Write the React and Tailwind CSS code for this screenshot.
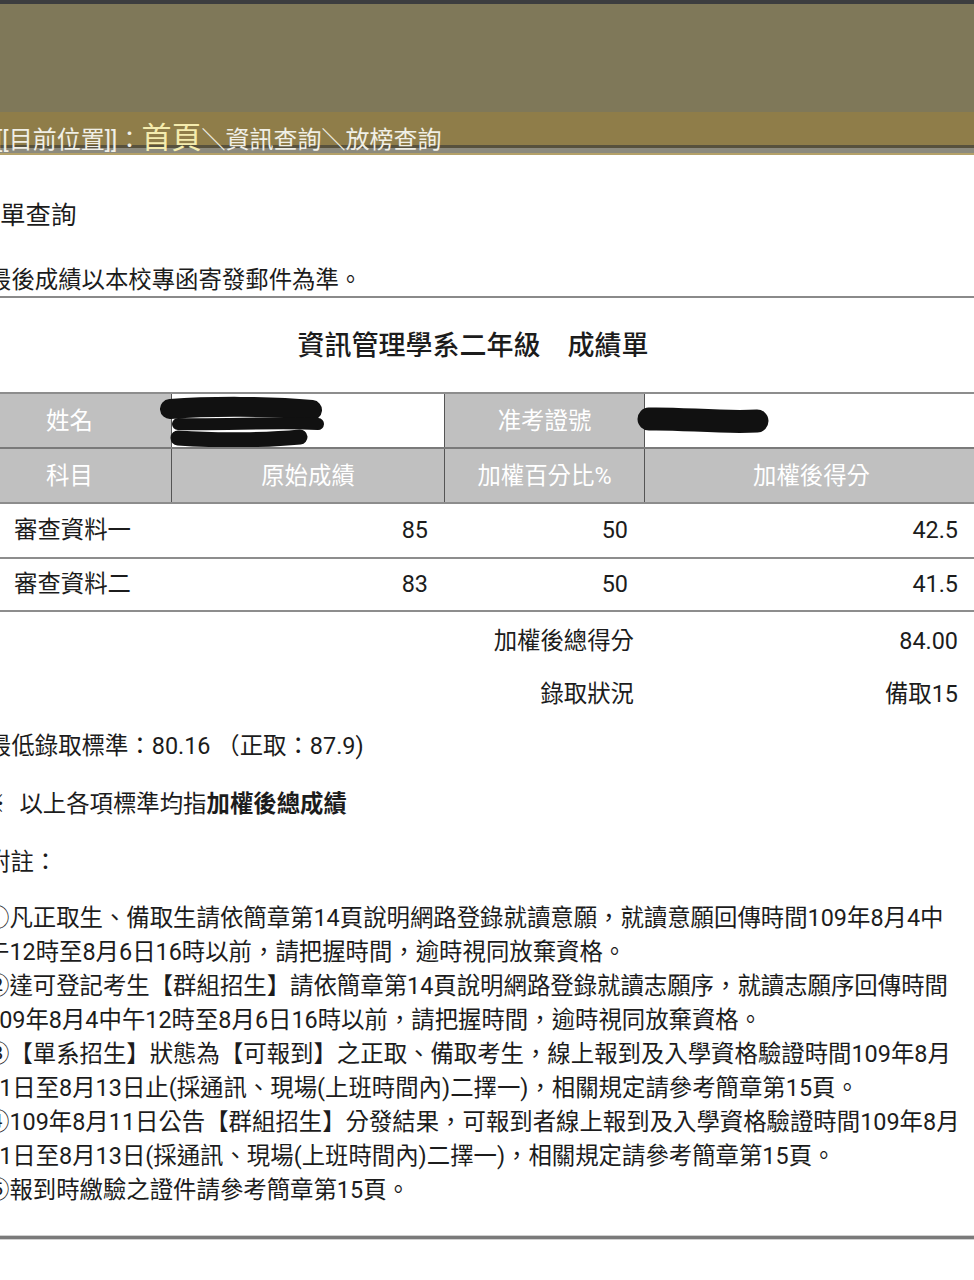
const notes = [
  '①凡正取生、備取生請依簡章第14頁說明網路登錄就讀意願，就讀意願回傳時間109年8月4中',
  '午12時至8月6日16時以前，請把握時間，逾時視同放棄資格。',
  '②達可登記考生【群組招生】請依簡章第14頁說明網路登錄就讀志願序，就讀志願序回傳時間',
  '109年8月4中午12時至8月6日16時以前，請把握時間，逾時視同放棄資格。',
  '③【單系招生】狀態為【可報到】之正取、備取考生，線上報到及入學資格驗證時間109年8月',
  '11日至8月13日止(採通訊、現場(上班時間內)二擇一)，相關規定請參考簡章第15頁。',
  '④109年8月11日公告【群組招生】分發結果，可報到者線上報到及入學資格驗證時間109年8月',
  '11日至8月13日(採通訊、現場(上班時間內)二擇一)，相關規定請參考簡章第15頁。',
  '⑤報到時繳驗之證件請參考簡章第15頁。',
];

const scores = [
  { name: '審查資料一', raw: '85', pct: '50', weighted: '42.5' },
  { name: '審查資料二', raw: '83', pct: '50', weighted: '41.5' },
];

const Header = () => (
  <div>
    <div className="h-[4px] bg-[#3c3d3f]" />
    <div className="h-[108px] bg-[#7f7859]" />
    <div className="h-[33px] bg-[#8f7d49] flex items-end">
      <div className="relative z-10 -ml-[4px] -mb-[8px] flex items-baseline whitespace-nowrap text-[24px] leading-none text-[#f0efe6]">
        <span>[[目前位置]]：</span>
        <span className="text-[30px] text-[#f4ecae]">首頁</span>
        <span>＼資訊查詢＼放榜查詢</span>
      </div>
    </div>
    <div className="h-[3px] bg-[#57513d]" />
    <div className="h-[5px] bg-[#8c8a7d]" />
    <div className="h-[2px] bg-[#b4a169]" />
  </div>
);

const Row = ({ children, last }) => (
  <div
    className={
      'grid grid-cols-[204px_273px_200px_333px] h-[55px] border-t-2 border-[#8d8d8d]' +
      (last ? ' border-b-2' : '')
    }
  >
    {children}
  </div>
);

const HeadCell = ({ children, edge }) => (
  <div
    className={
      'flex items-center justify-center pt-[3px] bg-[#c0c0c0] text-white' +
      (edge ? ' border-r-[1.5px] border-[#555555]' : '')
    }
  >
    {children}
  </div>
);

const ScoreTable = () => (
  <div className="text-[23.4px]">
    <Row>
      <HeadCell edge>姓名</HeadCell>
      <div className="relative bg-white border-r-[1.5px] border-[#555555]">
        <svg className="absolute left-[-12px] top-0 w-[170px] h-[53px]" viewBox="0 0 170 53">
          <path d="M10 15 C 50 12, 110 12, 152 16" stroke="#111" strokeWidth="20" strokeLinecap="round" fill="none" />
          <path d="M18 30 C 60 31, 120 28, 158 30" stroke="#111" strokeWidth="12" strokeLinecap="round" fill="none" />
          <path d="M18 44 C 60 47, 110 46, 140 43" stroke="#111" strokeWidth="15" strokeLinecap="round" fill="none" />
        </svg>
      </div>
      <HeadCell edge>准考證號</HeadCell>
      <div className="relative bg-white">
        <svg className="absolute left-[-15px] top-0 w-[150px] h-[53px]" viewBox="0 0 150 53">
          <path d="M19 25 C 50 24, 90 29, 127 27" stroke="#111" strokeWidth="23" strokeLinecap="round" fill="none" />
        </svg>
      </div>
    </Row>
    <div className="grid grid-cols-[204px_273px_200px_333px] h-[55px] border-t-2 border-[#7a7a7a]">
      <HeadCell edge>科目</HeadCell>
      <HeadCell edge>原始成績</HeadCell>
      <HeadCell edge>加權百分比%</HeadCell>
      <HeadCell>加權後得分</HeadCell>
    </div>
    {scores.map((s, i) => (
      <Row key={s.name} last={i === scores.length - 1}>
        <div className="flex items-center pl-[46px]">{s.name}</div>
        <div className="flex items-center justify-end pr-[17px]">{s.raw}</div>
        <div className="flex items-center justify-end pr-[17px]">{s.pct}</div>
        <div className="flex items-center justify-end pr-[20px]">{s.weighted}</div>
      </Row>
    ))}
    <div className="grid grid-cols-[204px_273px_200px_333px] h-[57px] pt-[3px]">
      <div />
      <div />
      <div className="flex items-center justify-end pr-[11px]">加權後總得分</div>
      <div className="flex items-center justify-end pr-[20px]">84.00</div>
    </div>
    <div className="grid grid-cols-[204px_273px_200px_333px] h-[51px]">
      <div />
      <div />
      <div className="flex items-center justify-end pr-[11px]">錄取狀況</div>
      <div className="flex items-center justify-end pr-[20px]">備取15</div>
    </div>
  </div>
);

export default function App() {
  return (
    <div className="w-[974px] h-[1280px] overflow-hidden bg-white text-[#1c1c1c] font-['Roboto','Noto_Sans_CJK_TC',sans-serif]">
      <Header />
      <div className="mt-[42px] h-[36px] text-[25.5px] leading-[36px] whitespace-nowrap">單查詢</div>
      <div className="mt-[31px] -ml-[12px] h-[32px] text-[23.4px] leading-[32px] whitespace-nowrap">
        最後成績以本校專函寄發郵件為準。
      </div>
      <div className="h-[2px] bg-[#8a8a8a]" />

      <div className="-ml-[32px] w-[1010px]">
        <div className="mt-[28px] h-[40px] text-center text-[27px] leading-[40px] font-medium whitespace-nowrap">
          資訊管理學系二年級　成績單
        </div>
        <div className="mt-[26px]">
          <ScoreTable />
        </div>
      </div>

      <div className="text-[23.4px] whitespace-nowrap">
        <div className="mt-[10px] -ml-[12px] h-[32px] leading-[32px]">最低錄取標準：80.16 （正取：87.9)</div>
        <div className="mt-[26px] -ml-[18px] h-[32px] leading-[32px]">
          <span>※</span>
          <span className="ml-[14px]">以上各項標準均指</span>
          <span className="font-bold">加權後總成績</span>
        </div>
        <div className="mt-[26px] -ml-[13px] h-[32px] leading-[32px]">附註：</div>
        <div className="mt-[23px] -ml-[14px]">
          {notes.map((n) => (
            <div key={n} className="h-[34px] leading-[34px]">{n}</div>
          ))}
        </div>
      </div>

      <div className="mt-[28px] h-[1px] bg-[#d0d0d0]" />
      <div className="h-[3px] bg-[#7a7a7a]" />
      <div className="h-[1px] bg-[#d0d0d0]" />
    </div>
  );
}
